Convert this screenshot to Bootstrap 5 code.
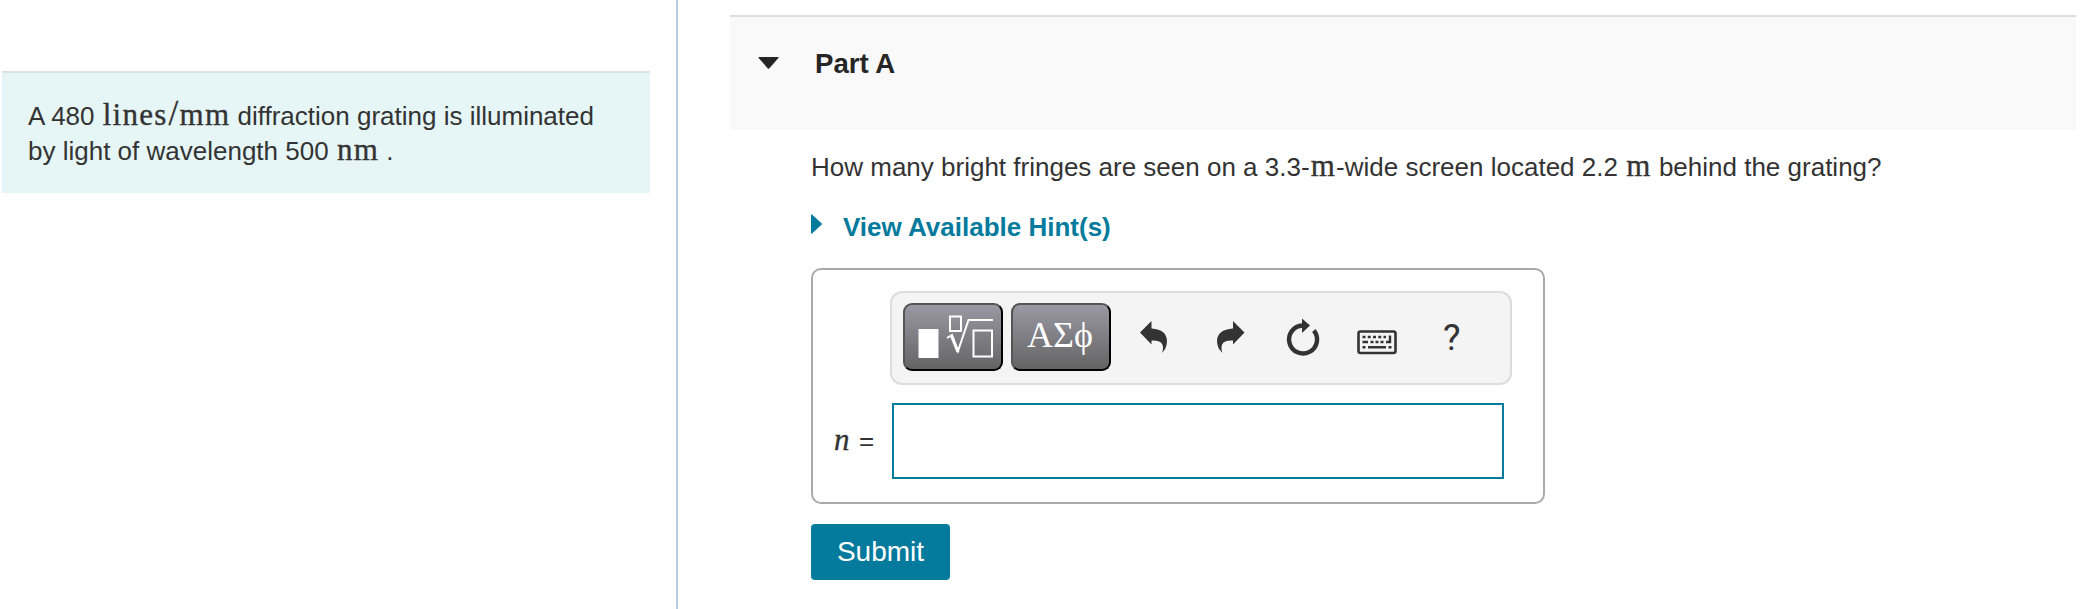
<!DOCTYPE html>
<html lang="en">
<head>
<meta charset="utf-8">
<title>Part A</title>
<link rel="stylesheet" href="https://cdn.jsdelivr.net/npm/bootstrap@5.3.0/dist/css/bootstrap.min.css">
<style>
body{font-family:"Liberation Sans",Arial,sans-serif;font-size:26px;line-height:35px;color:#333;background:#fff;overflow:hidden}
.page{height:609px}
.side{width:678px;border-right:2px solid #b9cbe0;padding:71px 26px 0 2px}
.intro{height:122px;background:#e6f6f6;border-top:2px solid #dce0df;padding:23px 0 0 26px;white-space:nowrap}
.tex{font-family:"Liberation Serif",serif;font-size:31px;line-height:1;letter-spacing:1.25px;-webkit-text-stroke:.35px #333}
.intro .tex{margin-left:1px}
.slash{font-size:35px;margin:0 0 0 1px}
.wide-m{display:inline-block;width:26.5px;text-align:center;letter-spacing:0}
.main{padding:15px 5px 0 52px}
.part-head{height:115px;background:#f9f9f9;border-top:2px solid #dcdfde;padding:0 0 0 28px;color:#252525}
.part-title{font-size:27.6px;font-weight:700;line-height:35px;margin:29px 0 0 36px}
.body-col{padding-left:81px}
.question{margin-top:20px;height:38px;white-space:nowrap}
.hint{margin-top:22px;height:35px;color:#047a9c;font-weight:700;text-decoration:none}
.answer{width:734px;height:236px;margin-top:23px;border:2px solid #a9a9a9;border-radius:10px;padding:21px 0 0 21px}
.tools{width:622px;height:94px;margin-left:56px;background:#f4f4f4;border:2px solid #dcdcdc;border-radius:12px;padding:10px 0 0 11px}
.pal{width:100px;height:68px;border:2px solid #555;border-right-color:#000;border-bottom-color:#000;border-radius:9px;background:linear-gradient(#9a98a3,#646464);color:#fff;padding:0;margin-right:8px}
.greek{font-family:"Liberation Serif",serif;font-size:36px;line-height:56px;padding:0 2px 5px 0}
.eq{width:58px;padding-top:21px}
.eq .tex{margin-right:1px}
.field{width:612px;height:76px;border:2px solid #047a9c;border-radius:0;padding:0}
.submit{width:139px;height:56px;margin-top:20px;background:#047a9c;color:#fff;border:0;border-radius:4px;font-size:28px;line-height:56px;padding:0}
</style>
<script src="https://cdn.jsdelivr.net/npm/bootstrap@5.3.0/dist/js/bootstrap.bundle.min.js"></script>
</head>
<body>
<div class="page d-flex">
  <aside class="side flex-shrink-0">
    <div class="intro">
      A 480 <span class="tex">lines<span class="slash">/</span>mm</span> diffraction grating is illuminated<br>
      by light of wavelength 500 <span class="tex">nm</span>&nbsp;.
    </div>
  </aside>
  <main class="main flex-grow-1">
    <header class="part-head d-flex align-items-start">
      <svg width="21" height="12" viewBox="0 0 21 12" style="margin-top:40px"><path d="M1 0H20Q21 0 20.4 1L11.2 11.4Q10.5 12 9.8 11.4L.6 1Q0 0 1 0Z" fill="#252525"/></svg>
      <h2 class="part-title mb-0">Part A</h2>
    </header>
    <div class="body-col">
      <div class="question">How many bright fringes are seen on a 3.3-<span class="tex wide-m">m</span>-wide screen located 2.2 <span class="tex wide-m">m</span> behind the grating?</div>
      <a class="hint d-flex align-items-start"><svg width="11" height="20" viewBox="0 0 11 20" class="flex-shrink-0" style="margin:4px 21px 0 0"><path d="M0 1Q0 0 1 .6L10.5 9.3Q11 10 10.5 10.7L1 19.5Q0 20 0 19Z" fill="#047a9c"/></svg>View Available Hint(s)</a>
      <section class="answer">
        <div class="tools d-flex">
          <button class="pal"><svg class="d-block" width="96" height="64" viewBox="0 0 96 64" fill="none" stroke="#fff"><path d="M13.500 24H33.500V53H13.500Z" fill="#fff" stroke="none"/><path d="M45 11.5H56V26H45ZM68.500 25.500H87V51.500H68.500Z" stroke-width="2"/><path d="M42 33L47 30L53 46L63.500 15H88" stroke-width="2"/><path d="M46.500 31L53 47" stroke-width="3"/></svg></button>
          <button class="pal greek me-0">ΑΣϕ</button>
          <svg width="390" height="68" viewBox="1111 303 390 68" fill="#333"><path d="M1140 332.500L1151.500 321V328.500C1162 329 1167 334 1167 341Q1167 348 1162 353Q1164.500 346 1161 342.500Q1158 340 1151.500 340.500V344.500Z"/><path d="M1244.500 332.500L1233 321V328.500C1222.500 329 1217 334 1217 341Q1217 348 1222.500 353Q1220 346 1223.500 342.500Q1226.500 340 1233 340.500V344.500Z"/><path d="M1302.500 325.500A14 14 0 1 0 1313.800 330.500" fill="none" stroke="#333" stroke-width="4.400"/><path d="M1302 318.500L1310 325.500L1302 333Z"/><rect x="1358.500" y="331.500" width="37" height="21.500" rx="2" fill="none" stroke="#333" stroke-width="2.600"/><path d="M1362.500 337H1386" stroke="#333" stroke-width="2.600" stroke-dasharray="3 2.250"/><path d="M1362.500 342H1368M1370.500 342H1373.500M1375.500 342H1378.500M1380.500 342H1383.500M1386 342H1390V335.500M1362.500 347.200H1365.500M1368 347.200H1386M1388.500 347.200H1391.500" fill="none" stroke="#333" stroke-width="2.400"/><text x="1443" y="350" font-family="Roboto,sans-serif" font-size="37">?</text></svg>
        </div>
        <div class="d-flex" style="margin-top:18px">
          <div class="eq"><span class="tex fst-italic">n</span> =</div>
          <input class="field" aria-label="n">
        </div>
      </section>
      <button class="submit d-block">Submit</button>
    </div>
  </main>
</div>
</body>
</html>
